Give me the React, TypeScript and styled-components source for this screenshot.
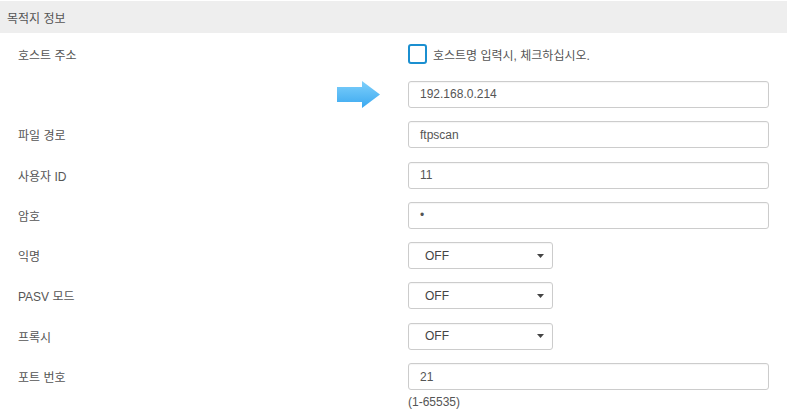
import React from 'react';
import styled, { createGlobalStyle } from 'styled-components';

const GlobalStyle = createGlobalStyle`
  body {
    margin: 0;
    background: #fff;
    font-family: 'Liberation Sans', 'Noto Sans CJK KR', Arial, sans-serif;
    font-size: 12px;
    color: #555;
  }
`;

const Panel = styled.div`
  width: 787px;
  padding-top: 1px;
`;

const Header = styled.div`
  height: 32px;
  display: flex;
  align-items: center;
  padding: 0 7px;
  background: #eeeeee;
  color: #555;
  font-size: 12px;
`;

const Form = styled.div`
  display: flex;
  flex-direction: column;
  gap: 13.3px;
  padding-top: 7.7px;
`;

const Row = styled.div`
  display: grid;
  grid-template-columns: 408px 361px;
  align-items: start;
`;

const Label = styled.div`
  height: 27px;
  display: flex;
  align-items: center;
  padding-left: 18px;
  color: #555;
`;

const ArrowCell = styled.div`
  height: 27px;
  display: flex;
  align-items: center;
  justify-content: flex-end;
  padding-right: 28px;
`;

const Field = styled.div`
  display: flex;
  flex-direction: column;
`;

const TextBox = styled.div`
  height: 27px;
  box-sizing: border-box;
  border: 1px solid #ccc;
  border-radius: 3px;
  display: flex;
  align-items: center;
  padding: 0 11px;
  color: #555;
  box-shadow: inset 0 1px 1px rgba(0, 0, 0, 0.04);
`;

const SelectBox = styled(TextBox)<{ $width?: number }>`
  width: ${(p) => p.$width ?? 145}px;
  justify-content: space-between;
  padding: 0 8px 0 16px;
  color: #444;
`;

const Hint = styled.div`
  margin-top: 5px;
  color: #555;
`;

const CheckLine = styled.label`
  height: 27px;
  display: flex;
  align-items: center;
  gap: 6px;
  color: #555;
`;

const CheckSquare = styled.span`
  width: 19px;
  height: 20px;
  box-sizing: border-box;
  border: 2px solid #1b8fd0;
  border-radius: 3px;
  background: #fff;
`;

function Arrow() {
  return (
    <svg width="43" height="27" viewBox="0 0 43 27">
      <defs>
        <linearGradient id="ag" x1="0" y1="0" x2="0" y2="1">
          <stop offset="0" stopColor="#7fd0fb" />
          <stop offset="1" stopColor="#3aa8f0" />
        </linearGradient>
      </defs>
      <path d="M0 6 H25 V0 L43 13.5 L25 27 V21 H0 Z" fill="url(#ag)" />
    </svg>
  );
}

function Caret() {
  return (
    <svg width="7" height="4" viewBox="0 0 7 4">
      <path d="M0 0 H7 L3.5 4 Z" fill="#444" />
    </svg>
  );
}

function InputRow({ label, value, hint }: { label: string; value: string; hint?: string }) {
  return (
    <Row>
      <Label>{label}</Label>
      <Field>
        <TextBox>{value}</TextBox>
        {hint && <Hint>{hint}</Hint>}
      </Field>
    </Row>
  );
}

function SelectRow({ label, value }: { label: string; value: string }) {
  return (
    <Row>
      <Label>{label}</Label>
      <SelectBox>
        <span>{value}</span>
        <Caret />
      </SelectBox>
    </Row>
  );
}

export default function App() {
  return (
    <>
      <GlobalStyle />
      <Panel>
        <Header>목적지 정보</Header>
        <Form>
          <Row>
            <Label>호스트 주소</Label>
            <CheckLine>
              <CheckSquare />
              호스트명 입력시, 체크하십시오.
            </CheckLine>
          </Row>
          <Row>
            <ArrowCell>
              <Arrow />
            </ArrowCell>
            <TextBox>192.168.0.214</TextBox>
          </Row>
          <InputRow label="파일 경로" value="ftpscan" />
          <InputRow label="사용자 ID" value="11" />
          <InputRow label="암호" value="•" />
          <SelectRow label="익명" value="OFF" />
          <SelectRow label="PASV 모드" value="OFF" />
          <SelectRow label="프록시" value="OFF" />
          <InputRow label="포트 번호" value="21" hint="(1-65535)" />
        </Form>
      </Panel>
    </>
  );
}
